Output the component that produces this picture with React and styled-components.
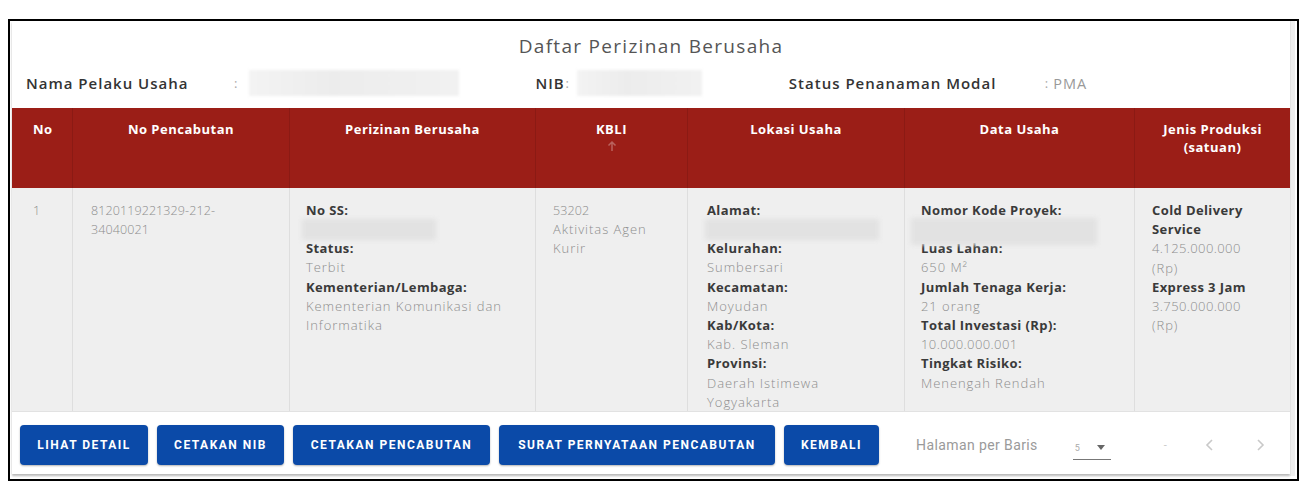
import React from 'react';
import styled, { createGlobalStyle } from 'styled-components';

const Global = createGlobalStyle`
  html, body { margin: 0; padding: 0; background: #fff; }
  body { font-family: "Open Sans", "Liberation Sans", sans-serif; }
  * { box-sizing: border-box; }
`;

const Page = styled.div`
  width: 1312px;
  height: 495px;
  padding: 19px 0 0 8px;
`;

const Frame = styled.div`
  width: 1291px;
  height: 462px;
  border: 2px solid #000;
  display: flex;
  padding-left: 2px;
`;

const Card = styled.div`
  width: 1278px;
  height: 453px;
  background: #fff;
  box-shadow: 0 2px 2px rgba(0, 0, 0, 0.28);
  display: flex;
  flex-direction: column;
  overflow: hidden;
`;

const Strip = styled.div`
  width: 5px;
  height: 455px;
  background: #efefef;
  border-left: 1px solid #e4e4e4;
`;

const Title = styled.div`
  height: 41px;
  padding-top: 12px;
  line-height: 26px;
  text-align: center;
  font-size: 19px;
  color: #555;
  letter-spacing: 1.3px;
`;

const InfoRow = styled.div`
  height: 46px;
  padding: 0 0 4px 14px;
  display: flex;
  align-items: center;
  font-size: 15px;
`;

const InfoLabel = styled.span`
  font-weight: 600;
  color: #333;
  letter-spacing: 1px;
  width: ${(p) => p.$w}px;
  margin-left: ${(p) => p.$ml || 0}px;
  flex: none;
  white-space: nowrap;
`;

const Colon = styled.span`
  color: #aaa;
  font-size: 13px;
  flex: none;
`;

const Value = styled.span`
  color: #999;
  font-size: 14.5px;
  margin-left: 5px;
  letter-spacing: 1px;
`;

const Blur = styled.div`
  width: ${(p) => p.$w}px;
  height: ${(p) => p.$h || 26}px;
  margin-left: ${(p) => p.$ml || 0}px;
  background: linear-gradient(90deg, #f3f3f3 0%, #ececec 40%, #f1f1f1 100%);
  filter: blur(1.5px);
  flex: none;
`;

const COLS = '60px 217px 246px 152px 217px 230px 1fr';

const Header = styled.div`
  display: grid;
  grid-template-columns: ${COLS};
  height: 80px;
  background: #9b1e17;
`;

const Th = styled.div`
  padding: 12px 6px 0 ${(p) => (p.$left ? '21px' : '6px')};
  text-align: ${(p) => (p.$left ? 'left' : 'center')};
  color: #fff;
  font-weight: 700;
  font-size: 13px;
  letter-spacing: 0.5px;
  line-height: 18px;
  border-left: ${(p) => (p.$first ? 'none' : '1px solid rgba(0,0,0,0.1)')};
  display: flex;
  flex-direction: column;
  align-items: ${(p) => (p.$left ? 'flex-start' : 'center')};
`;

const SortIcon = styled.svg`
  margin-top: 2px;
  opacity: 0.3;
`;

const Row = styled.div`
  display: grid;
  grid-template-columns: ${COLS};
  height: 224px;
  background: #efefef;
  border-bottom: 1px solid #e2e2e2;
  overflow: hidden;
`;

const Td = styled.div`
  padding: 13px 6px 0 ${(p) => (p.$pl || 17)}px;
  border-left: ${(p) => (p.$first ? 'none' : '1px solid #dedede')};
  line-height: 19.2px;
  overflow: hidden;
  white-space: nowrap;
`;

const Lbl = styled.div`
  font-weight: 700;
  color: #3a3a3a;
  font-size: 13px;
  letter-spacing: 0.4px;
`;

const Val = styled.div`
  font-weight: 300;
  color: #8d8d8d;
  font-size: ${(p) => (p.$num === 'digits' ? '12.5px' : '13px')};
  letter-spacing: ${(p) =>
    p.$num === 'digits' ? '0.1px' : p.$num === 'dots' ? '0.4px' : '0.95px'};
`;

const CellBlur = styled.div`
  width: ${(p) => p.$w}px;
  height: ${(p) => p.$h || 20}px;
  margin: ${(p) => p.$m || '0'};
  background: #e2e2e2;
  filter: blur(2px);
  position: relative;
  z-index: 1;
`;

const Footer = styled.div`
  flex: 1;
  display: flex;
  align-items: flex-start;
  padding: 13px 0 0 8px;
`;

const Btn = styled.button`
  width: ${(p) => p.$w}px;
  height: 40px;
  margin-right: 9px;
  padding: 0;
  border: none;
  border-radius: 4px;
  background: #0b4aa8;
  color: #fff;
  font-family: "Roboto", "Liberation Sans", sans-serif;
  font-weight: 700;
  font-size: 12px;
  letter-spacing: 1.5px;
  text-transform: uppercase;
  box-shadow: 0 1px 2px rgba(0, 0, 0, 0.3);
  flex: none;
`;

const Pager = styled.div`
  display: flex;
  align-items: center;
  height: 40px;
  margin-left: 28px;
  font-family: "Roboto", "Liberation Sans", sans-serif;
  color: #9a9a9a;
  font-size: 14px;
  letter-spacing: 0.4px;
`;

const Select = styled.div`
  width: 38px;
  height: 24px;
  margin-left: 35px;
  margin-top: 6px;
  border-bottom: 1px solid #777;
  display: flex;
  align-items: center;
  justify-content: space-between;
  padding: 0 6px 0 2px;
  font-size: 9px;
  color: #aaa;
`;

const Range = styled.span`
  margin-left: 53px;
  color: #c8c8c8;
  font-size: 11px;
`;

const NavBtn = styled.span`
  margin-left: ${(p) => p.$ml}px;
  display: inline-flex;
`;

const Chevron = ({ dir }) => (
  <svg width="10" height="14" viewBox="0 0 10 14">
    <path
      d={dir === 'left' ? 'M7 2 L2 7 L7 12' : 'M3 2 L8 7 L3 12'}
      fill="none"
      stroke="#c9c9c9"
      strokeWidth="1.6"
    />
  </svg>
);

export default function App() {
  return (
    <>
      <Global />
      <Page>
        <Frame>
          <Card>
            <Title>Daftar Perizinan Berusaha</Title>
            <InfoRow>
              <InfoLabel $w={208}>Nama Pelaku Usaha</InfoLabel>
              <Colon>:</Colon>
              <Blur $w={210} $ml={12} />
              <InfoLabel $w={30} $ml={76}>NIB</InfoLabel>
              <Colon>:</Colon>
              <Blur $w={125} $ml={8} />
              <InfoLabel $w={256} $ml={87}>Status Penanaman Modal</InfoLabel>
              <Colon>:</Colon>
              <Value>PMA</Value>
            </InfoRow>

            <Header>
              <Th $left $first>No</Th>
              <Th>No Pencabutan</Th>
              <Th>Perizinan Berusaha</Th>
              <Th>
                KBLI
                <SortIcon width="10" height="12" viewBox="0 0 10 12">
                  <path d="M5 11 V2 M1.5 5.5 L5 2 L8.5 5.5" fill="none" stroke="#fff" strokeWidth="1.5" />
                </SortIcon>
              </Th>
              <Th>Lokasi Usaha</Th>
              <Th>Data Usaha</Th>
              <Th>
                Jenis Produksi
                <br />
                (satuan)
              </Th>
            </Header>

            <Row>
              <Td $first $pl={21}>
                <Val $num="digits">1</Val>
              </Td>
              <Td $pl={18}>
                <Val $num="digits">8120119221329-212-</Val>
                <Val $num="digits">34040021</Val>
              </Td>
              <Td $pl={16}>
                <Lbl>No SS:</Lbl>
                <CellBlur $w={134} $h={21} $m="-1px 0 -1px -4px" />
                <Lbl>Status:</Lbl>
                <Val>Terbit</Val>
                <Lbl>Kementerian/Lembaga:</Lbl>
                <Val>Kementerian Komunikasi dan</Val>
                <Val>Informatika</Val>
              </Td>
              <Td>
                <Val $num="digits">53202</Val>
                <Val>Aktivitas Agen</Val>
                <Val>Kurir</Val>
              </Td>
              <Td $pl={19}>
                <Lbl>Alamat:</Lbl>
                <CellBlur $w={174} $h={21} $m="-1px 0 -1px -2px" />
                <Lbl>Kelurahan:</Lbl>
                <Val>Sumbersari</Val>
                <Lbl>Kecamatan:</Lbl>
                <Val>Moyudan</Val>
                <Lbl>Kab/Kota:</Lbl>
                <Val>Kab. Sleman</Val>
                <Lbl>Provinsi:</Lbl>
                <Val>Daerah Istimewa</Val>
                <Val>Yogyakarta</Val>
              </Td>
              <Td $pl={16}>
                <Lbl>Nomor Kode Proyek:</Lbl>
                <CellBlur $w={186} $h={27} $m="-2px 0 -6px -10px" />
                <Lbl>Luas Lahan:</Lbl>
                <Val>650 M²</Val>
                <Lbl>Jumlah Tenaga Kerja:</Lbl>
                <Val>21 orang</Val>
                <Lbl>Total Investasi (Rp):</Lbl>
                <Val $num="dots">10.000.000.001</Val>
                <Lbl>Tingkat Risiko:</Lbl>
                <Val>Menengah Rendah</Val>
              </Td>
              <Td>
                <Lbl>Cold Delivery</Lbl>
                <Lbl>Service</Lbl>
                <Val $num="dots">4.125.000.000</Val>
                <Val>(Rp)</Val>
                <Lbl>Express 3 Jam</Lbl>
                <Val $num="dots">3.750.000.000</Val>
                <Val>(Rp)</Val>
              </Td>
            </Row>

            <Footer>
              <Btn $w={128}>Lihat Detail</Btn>
              <Btn $w={127}>Cetakan NIB</Btn>
              <Btn $w={197}>Cetakan Pencabutan</Btn>
              <Btn $w={276}>Surat Pernyataan Pencabutan</Btn>
              <Btn $w={95}>Kembali</Btn>
              <Pager>
                <span>Halaman per Baris</span>
                <Select>
                  <span>5</span>
                  <svg width="8" height="5" viewBox="0 0 8 5">
                    <path d="M0 0 H8 L4 5 Z" fill="#666" />
                  </svg>
                </Select>
                <Range>-</Range>
                <NavBtn $ml={38}>
                  <Chevron dir="left" />
                </NavBtn>
                <NavBtn $ml={40}>
                  <Chevron dir="right" />
                </NavBtn>
              </Pager>
            </Footer>
          </Card>
          <Strip />
        </Frame>
      </Page>
    </>
  );
}
